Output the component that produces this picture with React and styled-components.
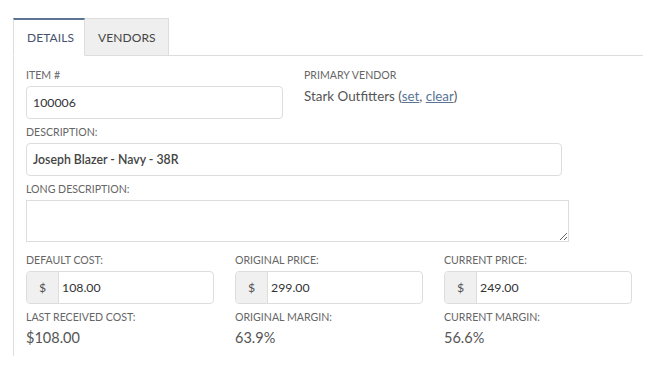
import React from "react";
import styled, { createGlobalStyle } from "styled-components";

const GlobalStyle = createGlobalStyle`
  body {
    margin: 0;
    background: #fff;
    font-family: "Lato", "Liberation Sans", sans-serif;
    color: #555;
  }
`

const Page = styled.div`
  padding: 18px 20px 0 13px;
  width: 630px;
`
const TabBar = styled.div`
  display: flex;
  border-bottom: 1px solid #ddd;
  height: 37px;
`
const Tab = styled.div`
  box-sizing: border-box;
  height: 38px;
  padding: 0 13px;
  display: flex;
  align-items: center;
  font-size: 12px;
  letter-spacing: 0.1px;
  color: ${p => (p.active ? "#46536e" : "#444")};
  background: ${p => (p.active ? "#fff" : "#efefef")};
  border: 1px solid #ddd;
  border-top: ${p => (p.active ? "2px solid #5c7595" : "1px solid #ddd")};
  border-bottom: ${p => (p.active ? "1px solid #fff" : "1px solid #ddd")};
  border-left: ${p => (p.active ? "1px solid #ddd" : "none")};
  width: ${p => p.w}px;
`
const Panel = styled.div`
  border-left: 1px solid #ddd;
  padding: 12px 0 3px 12px;
`
const Row = styled.div`
  display: grid;
  grid-template-columns: ${p => p.cols};
  column-gap: 21px;
  margin-bottom: ${p => p.mb || 6}px;
`
const Label = styled.div`
  font-size: 10.6px;
  line-height: 14px;
  color: #666;
  text-transform: uppercase;
  margin-bottom: 4px;
`
const TextInput = styled.div`
  box-sizing: border-box;
  height: 33px;
  width: ${p => p.w ? p.w + "px" : "100%"};
  border: 1px solid #ddd;
  border-radius: 4px;
  padding: 0 6px;
  display: flex;
  align-items: center;
  font-size: 12.3px;
  color: ${p => (p.bold ? "#444" : "#333")};
  font-weight: ${p => (p.bold ? 600 : 400)};
`
const TextArea = styled.textarea`
  display: block;
  box-sizing: border-box;
  width: 543px;
  height: 42px;
  border: 1px solid #ddd;
  border-radius: 0;
  margin: 0;
  resize: vertical;
`
const VendorText = styled.div`
  font-size: 13.4px;
  line-height: 18px;
  color: #555;
  margin-top: 5px;
`
const Link = styled.a`
  color: #5a7496;
  text-decoration: underline;
`
const Group = styled.div`
  box-sizing: border-box;
  display: flex;
  height: 33px;
  border: 1px solid #ddd;
  border-radius: 4px;
  overflow: hidden;
`
const Addon = styled.div`
  width: 31px;
  background: #f0f0f0;
  border-right: 1px solid #ddd;
  display: flex;
  align-items: center;
  justify-content: center;
  font-size: 12.3px;
  color: #555;
`
const GroupValue = styled.div`
  flex: 1;
  display: flex;
  align-items: center;
  padding-left: 3px;
  font-size: 12.3px;
  color: #333;
`
const Value = styled.div`
  font-size: 14.5px;
  line-height: 18px;
  margin-top: 5px;
  color: #555;
`

const prices = [
  { label: "Default Cost:", value: "108.00" },
  { label: "Original Price:", value: "299.00" },
  { label: "Current Price:", value: "249.00" },
]

const stats = [
  { label: "Last Received Cost:", value: "$108.00" },
  { label: "Original Margin:", value: "63.9%" },
  { label: "Current Margin:", value: "56.6%" },
]

const App = () => {
  return (
    <Page>
      <GlobalStyle />
      <TabBar>
        <Tab active w={72}>DETAILS</Tab>
        <Tab w={84}>VENDORS</Tab>
      </TabBar>
      <Panel>
        <Row cols="257px 1fr">
          <div>
            <Label>Item #</Label>
            <TextInput>100006</TextInput>
          </div>
          <div>
            <Label>Primary Vendor</Label>
            <VendorText>
              Stark Outfitters (<Link>set</Link>, <Link>clear</Link>)
            </VendorText>
          </div>
        </Row>
        <Row cols="1fr">
          <div>
            <Label>Description:</Label>
            <TextInput w={536} bold>Joseph Blazer - Navy - 38R</TextInput>
          </div>
        </Row>
        <Row cols="1fr" mb={11}>
          <div>
            <Label>Long Description:</Label>
            <TextArea />
          </div>
        </Row>
        <Row cols="188px 188px 188px">
          {prices.map(p => (
            <div key={p.label}>
              <Label>{p.label}</Label>
              <Group>
                <Addon>$</Addon>
                <GroupValue>{p.value}</GroupValue>
              </Group>
            </div>
          ))}
        </Row>
        <Row cols="188px 188px 188px" mb={0}>
          {stats.map(s => (
            <div key={s.label}>
              <Label>{s.label}</Label>
              <Value>{s.value}</Value>
            </div>
          ))}
        </Row>
      </Panel>
    </Page>
  );
};

export default App;
